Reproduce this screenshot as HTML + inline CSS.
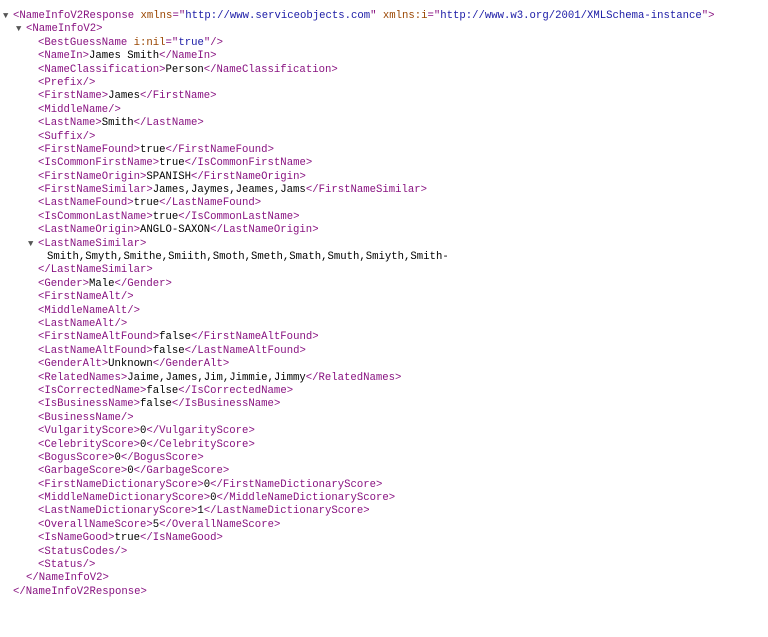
<!DOCTYPE html>
<html><head><style>
body{margin:0;background:#fff;width:768px;height:637px;overflow:hidden}
#c{position:absolute;left:0;top:10px;font-family:"Liberation Mono",monospace;font-size:10.63px;line-height:13.4px;white-space:normal;color:#000}
.l{position:relative;height:13.4px;white-space:pre}
.t{color:#881280}.a{color:#994500}.v{color:#1a1aa6}
.ar{position:absolute;font-size:9px;color:#555}
</style></head><body><div id="c">
<div class="l" style="padding-left:13px"><span class="ar" style="left:3px">▼</span><span class="t">&lt;NameInfoV2Response</span> <span class="a">xmlns</span><span class="t">="</span><span class="v">http://www.serviceobjects.com</span><span class="t">"</span> <span class="a">xmlns:i</span><span class="t">="</span><span class="v">http://www.w3.org/2001/XMLSchema-instance</span><span class="t">"&gt;</span></div>
<div class="l" style="padding-left:26px"><span class="ar" style="left:16px">▼</span><span class="t">&lt;NameInfoV2&gt;</span></div>
<div class="l" style="padding-left:38px"><span class="t">&lt;BestGuessName</span> <span class="a">i:nil</span><span class="t">="</span><span class="v">true</span><span class="t">"/&gt;</span></div>
<div class="l" style="padding-left:38px"><span class="t">&lt;NameIn&gt;</span>James Smith<span class="t">&lt;/NameIn&gt;</span></div>
<div class="l" style="padding-left:38px"><span class="t">&lt;NameClassification&gt;</span>Person<span class="t">&lt;/NameClassification&gt;</span></div>
<div class="l" style="padding-left:38px"><span class="t">&lt;Prefix/&gt;</span></div>
<div class="l" style="padding-left:38px"><span class="t">&lt;FirstName&gt;</span>James<span class="t">&lt;/FirstName&gt;</span></div>
<div class="l" style="padding-left:38px"><span class="t">&lt;MiddleName/&gt;</span></div>
<div class="l" style="padding-left:38px"><span class="t">&lt;LastName&gt;</span>Smith<span class="t">&lt;/LastName&gt;</span></div>
<div class="l" style="padding-left:38px"><span class="t">&lt;Suffix/&gt;</span></div>
<div class="l" style="padding-left:38px"><span class="t">&lt;FirstNameFound&gt;</span>true<span class="t">&lt;/FirstNameFound&gt;</span></div>
<div class="l" style="padding-left:38px"><span class="t">&lt;IsCommonFirstName&gt;</span>true<span class="t">&lt;/IsCommonFirstName&gt;</span></div>
<div class="l" style="padding-left:38px"><span class="t">&lt;FirstNameOrigin&gt;</span>SPANISH<span class="t">&lt;/FirstNameOrigin&gt;</span></div>
<div class="l" style="padding-left:38px"><span class="t">&lt;FirstNameSimilar&gt;</span>James,Jaymes,Jeames,Jams<span class="t">&lt;/FirstNameSimilar&gt;</span></div>
<div class="l" style="padding-left:38px"><span class="t">&lt;LastNameFound&gt;</span>true<span class="t">&lt;/LastNameFound&gt;</span></div>
<div class="l" style="padding-left:38px"><span class="t">&lt;IsCommonLastName&gt;</span>true<span class="t">&lt;/IsCommonLastName&gt;</span></div>
<div class="l" style="padding-left:38px"><span class="t">&lt;LastNameOrigin&gt;</span>ANGLO-SAXON<span class="t">&lt;/LastNameOrigin&gt;</span></div>
<div class="l" style="padding-left:38px"><span class="ar" style="left:28px">▼</span><span class="t">&lt;LastNameSimilar&gt;</span></div>
<div class="l" style="padding-left:47px">Smith,Smyth,Smithe,Smiith,Smoth,Smeth,Smath,Smuth,Smiyth,Smith-</div>
<div class="l" style="padding-left:38px"><span class="t">&lt;/LastNameSimilar&gt;</span></div>
<div class="l" style="padding-left:38px"><span class="t">&lt;Gender&gt;</span>Male<span class="t">&lt;/Gender&gt;</span></div>
<div class="l" style="padding-left:38px"><span class="t">&lt;FirstNameAlt/&gt;</span></div>
<div class="l" style="padding-left:38px"><span class="t">&lt;MiddleNameAlt/&gt;</span></div>
<div class="l" style="padding-left:38px"><span class="t">&lt;LastNameAlt/&gt;</span></div>
<div class="l" style="padding-left:38px"><span class="t">&lt;FirstNameAltFound&gt;</span>false<span class="t">&lt;/FirstNameAltFound&gt;</span></div>
<div class="l" style="padding-left:38px"><span class="t">&lt;LastNameAltFound&gt;</span>false<span class="t">&lt;/LastNameAltFound&gt;</span></div>
<div class="l" style="padding-left:38px"><span class="t">&lt;GenderAlt&gt;</span>Unknown<span class="t">&lt;/GenderAlt&gt;</span></div>
<div class="l" style="padding-left:38px"><span class="t">&lt;RelatedNames&gt;</span>Jaime,James,Jim,Jimmie,Jimmy<span class="t">&lt;/RelatedNames&gt;</span></div>
<div class="l" style="padding-left:38px"><span class="t">&lt;IsCorrectedName&gt;</span>false<span class="t">&lt;/IsCorrectedName&gt;</span></div>
<div class="l" style="padding-left:38px"><span class="t">&lt;IsBusinessName&gt;</span>false<span class="t">&lt;/IsBusinessName&gt;</span></div>
<div class="l" style="padding-left:38px"><span class="t">&lt;BusinessName/&gt;</span></div>
<div class="l" style="padding-left:38px"><span class="t">&lt;VulgarityScore&gt;</span>0<span class="t">&lt;/VulgarityScore&gt;</span></div>
<div class="l" style="padding-left:38px"><span class="t">&lt;CelebrityScore&gt;</span>0<span class="t">&lt;/CelebrityScore&gt;</span></div>
<div class="l" style="padding-left:38px"><span class="t">&lt;BogusScore&gt;</span>0<span class="t">&lt;/BogusScore&gt;</span></div>
<div class="l" style="padding-left:38px"><span class="t">&lt;GarbageScore&gt;</span>0<span class="t">&lt;/GarbageScore&gt;</span></div>
<div class="l" style="padding-left:38px"><span class="t">&lt;FirstNameDictionaryScore&gt;</span>0<span class="t">&lt;/FirstNameDictionaryScore&gt;</span></div>
<div class="l" style="padding-left:38px"><span class="t">&lt;MiddleNameDictionaryScore&gt;</span>0<span class="t">&lt;/MiddleNameDictionaryScore&gt;</span></div>
<div class="l" style="padding-left:38px"><span class="t">&lt;LastNameDictionaryScore&gt;</span>1<span class="t">&lt;/LastNameDictionaryScore&gt;</span></div>
<div class="l" style="padding-left:38px"><span class="t">&lt;OverallNameScore&gt;</span>5<span class="t">&lt;/OverallNameScore&gt;</span></div>
<div class="l" style="padding-left:38px"><span class="t">&lt;IsNameGood&gt;</span>true<span class="t">&lt;/IsNameGood&gt;</span></div>
<div class="l" style="padding-left:38px"><span class="t">&lt;StatusCodes/&gt;</span></div>
<div class="l" style="padding-left:38px"><span class="t">&lt;Status/&gt;</span></div>
<div class="l" style="padding-left:26px"><span class="t">&lt;/NameInfoV2&gt;</span></div>
<div class="l" style="padding-left:13px"><span class="t">&lt;/NameInfoV2Response&gt;</span></div>
</div></body></html>
